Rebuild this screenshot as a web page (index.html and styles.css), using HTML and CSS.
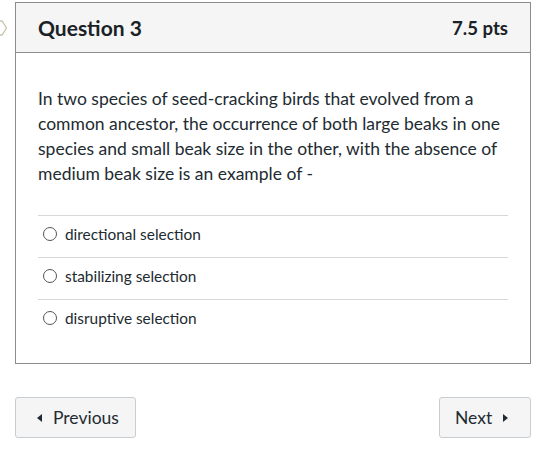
FILE: index.html
```html
<!DOCTYPE html>
<html>
<head>
<meta charset="utf-8">
<link rel="stylesheet" href="styles.css">
</head>
<body>
<div class="page">
  <div class="flag">
    <svg width="8" height="16" viewBox="0 0 8 16"><path d="M-3 1 L2 1 L6.5 8 L2 15 L-3 15" fill="none" stroke="#c9c2ad" stroke-width="1.3" stroke-linejoin="miter"/></svg>
  </div>
  <div class="card">
    <div class="card-header">
      <span class="title">Question 3</span>
      <span class="pts">7.5 pts</span>
    </div>
    <div class="card-body">
      <p class="question">In two species of seed-cracking birds that evolved from a common ancestor, the occurrence of both large beaks in one species and small beak size in the other, with the absence of medium beak size is an example of -</p>
      <div class="answers">
        <label class="answer"><span class="radio"></span>directional selection</label>
        <label class="answer"><span class="radio"></span>stabilizing selection</label>
        <label class="answer"><span class="radio"></span>disruptive selection</label>
      </div>
    </div>
  </div>
  <div class="nav">
    <button class="btn"><span class="tri tri-left"></span>Previous</button>
    <button class="btn">Next<span class="tri tri-right"></span></button>
  </div>
</div>
</body>
</html>
```
FILE: styles.css
```css
* { box-sizing: border-box; }
body {
  margin: 0;
  font-family: Lato, "Liberation Sans", sans-serif;
  color: #222b31;
  background: #fff;
}
.page {
  position: relative;
  padding: 2px 8px 0 15px;
}
.flag {
  position: absolute;
  left: 0;
  top: 20px;
}
.card {
  border: 1px solid #8d8d8d;
  width: 516px;
}
.card-header {
  height: 50px;
  background: #f5f5f5;
  border-bottom: 1px solid #8d8d8d;
  display: flex;
  align-items: center;
  justify-content: space-between;
  padding: 0 22px 0 22px;
}
.title {
  font-size: 21px;
  font-weight: 700;
  color: #1a2227;
}
.pts {
  font-size: 18.6px;
  font-weight: 700;
  color: #1a2227;
}
.card-body {
  padding: 33px 22px 22px 22px;
}
.question {
  margin: 0 0 29px 0;
  font-size: 17.5px;
  line-height: 25px;
}
.answer {
  display: flex;
  align-items: center;
  height: 42px;
  border-top: 1px solid #d7d7d7;
  font-size: 15.4px;
  padding-left: 5px;
  padding-bottom: 6px;
}
.radio {
  width: 14px;
  height: 14px;
  border: 1px solid #555;
  border-radius: 50%;
  margin-right: 8px;
  flex: none;
}
.nav {
  display: flex;
  justify-content: space-between;
  width: 516px;
  margin-top: 33px;
}
.btn {
  font-family: Lato, "Liberation Sans", sans-serif;
  font-size: 17.5px;
  color: #222b31;
  background: #f5f5f5;
  border: 1px solid #c7cdd1;
  border-radius: 3px;
  height: 41px;
  display: flex;
  align-items: center;
  padding: 0 15px;
}
.btn:first-child { width: 121px; padding-left: 21px; }
.btn:last-child { width: 92px; padding-left: 15px; }
.tri {
  width: 0;
  height: 0;
  border-top: 4px solid transparent;
  border-bottom: 4px solid transparent;
}
.tri-left {
  border-right: 5px solid #222b31;
  margin-right: 11px;
}
.tri-right {
  border-left: 5px solid #222b31;
  margin-left: 11px;
}
```
